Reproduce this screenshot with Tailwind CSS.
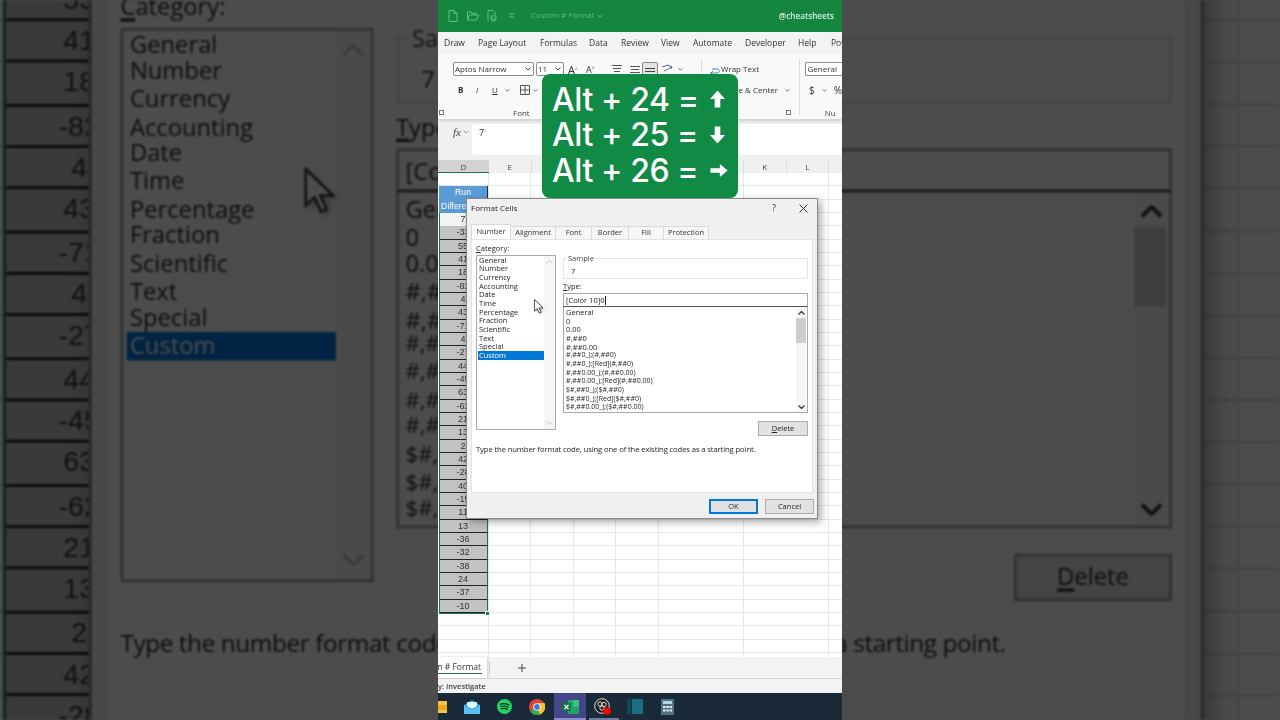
<!doctype html>
<html>
  <head>
    <title>Custom # Format</title>
    <meta charset="UTF-8" />
    <script src="https://cdn.jsdelivr.net/npm/@tailwindcss/browser@4"></script>
  </head>
  <body class="bg-[#4c4c4c] overflow-hidden font-['Open_Sans',sans-serif]">
    <div class="relative w-[1280px] h-[720px] overflow-hidden">
      <!-- blurred, zoomed copy of the video behind it -->
      <div class="absolute inset-0 overflow-hidden blur-[1.2px] brightness-[.3]">
        <div id="backdrop" class="absolute left-0 top-[-780px] w-[404px] h-[720px] origin-top-left scale-[3.168]"></div>
      </div>

      <div class="absolute left-[438px] top-0 w-[404px] h-[720px] overflow-hidden">
        <div id="screen" class="relative w-[404px] h-[720px] flex flex-col bg-white overflow-hidden text-[#262626] blur-[0.25px]">
          <!-- title bar -->
          <div class="h-[32px] bg-[#15863f] flex items-center shrink-0 pl-[10px] pr-[8px]">
            <svg class="w-[10px] h-[12px] text-[#5fc088]" viewBox="0 0 10 12" fill="none" stroke="currentColor"><path d="M1 .5h5l3 3v8H1zM6 .5v3h3" /></svg>
            <svg class="w-[12px] h-[10px] ml-[9px] text-[#5fc088]" viewBox="0 0 12 10" fill="none" stroke="currentColor"><path d="M.5 9V1h3.5l1 1.500h4V4M.5 9l2-5h9l-2 5z" /></svg>
            <svg class="w-[11px] h-[12px] ml-[8px] text-[#5fc088]" viewBox="0 0 11 12" fill="none" stroke="currentColor"><path d="M1 11V.5h5l2 2V5M4 6h5v3H4zM5 9v2h3V9" /></svg>
            <svg class="w-[7px] h-[6px] ml-[10px] text-[#5fc088]" viewBox="0 0 7 6" fill="none" stroke="currentColor"><path d="M1 1h5M1 4h5" /></svg>
            <span class="ml-[16px] text-[7.800px] text-[#5fb985]">Custom # Format</span>
            <svg class="w-[6px] h-[4px] ml-[3px] text-[#5fb985]" viewBox="0 0 6 4" fill="none" stroke="currentColor"><path d="M.5.5 3 3 5.500.5" /></svg>
            <span class="ml-auto text-[8.200px] font-semibold text-[#d5eedd]">@cheatsheets</span>
          </div>

          <!-- ribbon tabs -->
          <div class="h-[22px] bg-[#f3f3f3] flex items-center shrink-0 text-[8.500px] text-[#333] whitespace-nowrap">
            <span class="ml-[6px] w-[34px] shrink-0">Draw</span>
            <span class="w-[62px] shrink-0">Page Layout</span>
            <span class="w-[49px] shrink-0">Formulas</span>
            <span class="w-[32px] shrink-0">Data</span>
            <span class="w-[40px] shrink-0">Review</span>
            <span class="w-[32px] shrink-0">View</span>
            <span class="w-[52px] shrink-0">Automate</span>
            <span class="w-[53px] shrink-0">Developer</span>
            <span class="w-[33px] shrink-0">Help</span>
            <span class="shrink-0">Power</span>
          </div>

          <!-- ribbon -->
          <div class="h-[65px] bg-[#f9f9f9] shrink-0 relative shadow-[0_2px_3px_#cfcfcf] z-10 text-[8.500px] text-[#333]">
            <div class="flex items-center h-[27px] pt-[3px] whitespace-nowrap">
              <div class="ml-[15px] w-[81px] h-[14px] shrink-0 bg-white border border-[#8e8e8e] rounded-[2px] flex items-center pl-[1px] text-[8px]">Aptos Narrow<svg class="w-[6px] h-[4px] ml-auto mr-[2px]" viewBox="0 0 6 4" fill="none" stroke="#444"><path d="M.5.5 3 3 5.500.5" /></svg></div>
              <div class="ml-[2px] w-[28px] h-[14px] shrink-0 bg-white border border-[#8e8e8e] rounded-[2px] flex items-center pl-[1px] text-[8px]">11<svg class="w-[6px] h-[4px] ml-auto mr-[2px]" viewBox="0 0 6 4" fill="none" stroke="#444"><path d="M.5.5 3 3 5.500.5" /></svg></div>
              <span class="ml-[4px] w-[18px] shrink-0 text-[11px] leading-none">A<sup class="text-[5px] text-[#2b6cb0]">^</sup></span>
              <span class="w-[20px] shrink-0 text-[9px] leading-none">A<sup class="text-[5px] text-[#2b6cb0]">˅</sup></span>
              <svg class="ml-[5px] w-[12px] h-[9px] shrink-0" viewBox="0 0 12 9" stroke="#555"><path d="M1 .5h10M2 3.500h8M3 6.500h6" /></svg>
              <svg class="ml-[6px] w-[12px] h-[9px] shrink-0" viewBox="0 0 12 9" stroke="#555"><path d="M1 1.500h10M2 4.500h8M1 7.500h10" /></svg>
              <div class="ml-[1px] w-[16px] h-[14px] shrink-0 bg-[#e3e3e3] border border-[#8a8a8a] rounded-[2px] flex items-end justify-center pb-[2px]"><svg class="w-[10px] h-[5px]" viewBox="0 0 10 5" stroke="#444"><path d="M0 .5h10M0 3.500h10" /></svg></div>
              <svg class="ml-[3px] w-[14px] h-[11px] shrink-0" viewBox="0 0 14 11" fill="none" stroke="#5b6b8a"><path d="M1 3 7 1l3 2M3 7l8-4M9 2l2 1-1 2" /></svg>
              <svg class="ml-[3px] w-[5px] h-[3px] shrink-0" viewBox="0 0 6 4" fill="none" stroke="#444"><path d="M.5.5 3 3 5.500.5" /></svg>
              <svg class="ml-[26px] w-[12px] h-[12px] shrink-0" viewBox="0 0 12 12" fill="none" stroke="#3a8ac4"><path d="M1 10h7c3 0 3-4 0-4H3M4 8 2 10l2 2" /></svg>
              <span class="shrink-0 text-[8px]">Wrap Text</span>
              <div class="ml-[45.500px] w-[38px] h-[14px] shrink-0 bg-white border-y border-l border-[#8e8e8e] rounded-l-[2px] flex items-center pl-[2px] text-[8px]">General</div>
            </div>
            <div class="flex items-center h-[18px] whitespace-nowrap">
              <span class="ml-[20px] w-[18px] shrink-0 text-[8px] font-bold">B</span>
              <span class="w-[16px] shrink-0 text-[8px] italic">I</span>
              <span class="w-[13px] shrink-0 text-[8px] underline">U</span>
              <svg class="w-[5px] h-[3px] shrink-0" viewBox="0 0 6 4" fill="none" stroke="#444"><path d="M.5.5 3 3 5.500.5" /></svg>
              <svg class="ml-[10px] w-[10px] h-[10px] shrink-0" viewBox="0 0 10 10" fill="none" stroke="#555"><path d="M.5.5h9v9h-9zM5 .5v9M.5 5h9" /></svg>
              <svg class="ml-[3px] w-[5px] h-[3px] shrink-0" viewBox="0 0 6 4" fill="none" stroke="#444"><path d="M.5.5 3 3 5.500.5" /></svg>
              <span class="ml-[154px] w-[86px] text-right shrink-0 text-[8px]">Merge &amp; Center</span>
              <svg class="ml-[7px] w-[5px] h-[3px] shrink-0" viewBox="0 0 6 4" fill="none" stroke="#444"><path d="M.5.5 3 3 5.500.5" /></svg>
              <span class="ml-[19px] text-[10px] shrink-0">$</span>
              <svg class="ml-[7px] w-[5px] h-[3px] shrink-0" viewBox="0 0 6 4" fill="none" stroke="#444"><path d="M.5.5 3 3 5.500.5" /></svg>
              <span class="ml-[7px] text-[10px] shrink-0">%</span>
            </div>
            <div class="flex items-center h-[13px] mt-[7px] text-[8px] text-[#444]">
              <span class="ml-[1px] w-[5px] h-[5px] border border-[#777] shrink-0"></span>
              <span class="ml-[69px] shrink-0">Font</span>
              <span class="ml-[256px] w-[5px] h-[5px] border border-[#777] shrink-0"></span>
              <span class="ml-[34px] shrink-0">Nu</span>
            </div>
            <div class="absolute left-[263px] top-[5px] bottom-[4px] w-px bg-[#dcdcdc]"></div>
            <div class="absolute left-[361px] top-[5px] bottom-[4px] w-px bg-[#dcdcdc]"></div>
          </div>

          <!-- formula bar -->
          <div class="h-[41px] bg-[#f0f0f0] shrink-0 flex pt-[5px] pb-[5px]">
            <div class="w-[34px] flex items-start justify-end pr-[3px] pt-[3px]">
              <span class="font-['Liberation_Serif',serif] italic text-[11px] leading-none text-[#444]">fx</span>
              <svg class="ml-[2px] mt-[3px] w-[6px] h-[4px]" viewBox="0 0 6 4" fill="none" stroke="#999"><path d="M.5.5 3 3 5.500.5" /></svg>
            </div>
            <div class="flex-1 bg-white rounded-l-[3px] pl-[7px] pt-[2px] text-[9px] text-[#333]">7</div>
          </div>

          <!-- column headers -->
          <div class="h-[13px] bg-[#f0f0f0] shrink-0 flex text-[8px] text-[#444] leading-[13px]">
            <div class="w-[51px] text-center bg-[#d2d2d2] border-b border-[#217346]">D</div>
            <div class="w-[42.500px] text-center border-r border-[#dcdcdc]">E</div>
            <div class="w-[42.500px] border-r border-[#dcdcdc]"></div>
            <div class="w-[42.500px] border-r border-[#dcdcdc]"></div>
            <div class="w-[42.500px] border-r border-[#dcdcdc]"></div>
            <div class="w-[42.500px] border-r border-[#dcdcdc]"></div>
            <div class="w-[42.500px] border-r border-[#dcdcdc]"></div>
            <div class="w-[42.500px] text-center border-r border-[#dcdcdc]">K</div>
            <div class="w-[42.500px] text-center border-r border-[#dcdcdc]">L</div>
          </div>

          <!-- sheet -->
          <div class="flex-1 flex min-h-0 bg-[image:repeating-linear-gradient(to_bottom,transparent_0,transparent_12.33px,#e6e6e6_12.33px,#e6e6e6_13.33px)]">
            <div class="w-[51px] shrink-0 border-r border-[#e6e6e6] pl-[1px]">
              <div class="h-[13.330px]"></div>
              <div class="h-[26.670px] bg-[#5b9bd5] text-white text-[8.700px] leading-[13.330px] text-center font-['Liberation_Sans',sans-serif] border-r border-[#1b2a3a] overflow-hidden whitespace-nowrap">Run<br />Differences</div>
              <div id="cells" class="relative border-x border-b border-[#217346] font-['Liberation_Sans',sans-serif] text-[9px] text-[#333] text-center">
                <div class="absolute right-[-3px] bottom-[-3px] w-[5px] h-[5px] bg-[#217346] border border-white z-10"></div>
              </div>
            </div>
            <div class="flex-1 bg-[image:repeating-linear-gradient(to_right,transparent_0,transparent_41.500px,#e6e6e6_41.500px,#e6e6e6_42.500px)]"></div>
          </div>

          <!-- sheet tabs -->
          <div class="h-[21px] bg-[#f3f3f3] shrink-0 flex items-stretch">
            <div class="w-[49px] bg-white flex items-center justify-end pr-[6px] font-medium text-[8.500px] text-[#333] shadow-[1px_0_2px_#ccc] whitespace-nowrap overflow-hidden relative">n # Format<span class="absolute left-0 right-[5px] bottom-[4px] h-[1.500px] bg-[#217346]"></span></div>
            <div class="w-px h-[13px] bg-[#ccc] ml-[2px] self-center"></div>
            <svg class="ml-[28px] w-[8px] h-[8px] self-center" viewBox="0 0 8 8" stroke="#444"><path d="M4 0v8M0 4h8" /></svg>
          </div>

          <!-- status bar -->
          <div class="h-[15px] bg-[#f3f3f3] border-t border-[#d5d5d5] shrink-0 text-[7.500px] font-semibold text-[#444] leading-[14px] whitespace-nowrap">y: Investigate</div>

          <!-- taskbar -->
          <div class="h-[27px] bg-[#1a2a39] shrink-0 flex items-center relative">
            <svg class="absolute left-0 w-[9px] h-[14px]" viewBox="0 0 9 14"><path d="M0 1h9v12H0z" fill="#f4c542" /><path d="M0 5h9v5H0z" fill="#e8a91c" /></svg>
            <svg class="absolute left-[26px] w-[16px] h-[14px]" viewBox="0 0 16 14"><path d="M0 5 8 0l8 5v9H0z" fill="#1d9fe0" /><path d="M0 5l8 5 8-5v9H0z" fill="#54c1f0" /><path d="M3 2h10v4L8 9 3 6z" fill="#e8f5fb" /></svg>
            <svg class="absolute left-[59px] w-[15px] h-[15px]" viewBox="0 0 16 16"><circle cx="8" cy="8" r="8" fill="#1ed760" /><path d="M3.500 5.500c3-1 6-.8 9 .8M4 8c2.500-.8 5.500-.6 7.800.7M4.500 10.500c2-.6 4.500-.5 6.500.6" fill="none" stroke="#123" stroke-width="1.300" stroke-linecap="round" /></svg>
            <svg class="absolute left-[91px] w-[16px] h-[16px]" viewBox="0 0 16 16"><circle cx="8" cy="8" r="8" fill="#e34133" /><path d="M8 8 1 12a8 8 0 0 0 7 4 8 8 0 0 0 7-4z" fill="#2fa84f" /><path d="M8 4h7.500a8 8 0 0 1-.5 8l-4 3.800L8 8z" fill="#fbc02d" /><circle cx="8" cy="8" r="3.800" fill="#fff" /><circle cx="8" cy="8" r="2.900" fill="#3b82d6" /></svg>
            <div class="absolute left-[116px] top-0 bottom-0 w-[32px] bg-[#45458a] border-b-2 border-[#8d8dc9]"></div>
            <svg class="absolute left-[124px] w-[17px] h-[14px]" viewBox="0 0 17 14"><path d="M6 0h11v14H6z" fill="#21a366" /><path d="M11 0h6v7h-6z" fill="#33c481" /><path d="M0 3h9v8H0z" fill="#107c41" /><path d="M2.500 4.800 6.500 9.200M6.500 4.800 2.500 9.200" stroke="#fff" stroke-width="1.200" /></svg>
            <div class="absolute left-[148px] bottom-0 h-[2px] w-[30px] ml-[3px] bg-[#6f7f9a]"></div>
            <svg class="absolute left-[156px] w-[17px] h-[17px]" viewBox="0 0 17 17"><circle cx="8" cy="8" r="7.300" fill="#1e1e1e" stroke="#ddd" /><circle cx="6" cy="6" r="2.200" fill="none" stroke="#ddd" /><circle cx="10" cy="6.500" r="2.200" fill="none" stroke="#ddd" /><circle cx="8" cy="10" r="2.200" fill="none" stroke="#ddd" /><circle cx="13" cy="13" r="3.800" fill="#f00" /></svg>
            <svg class="absolute left-[189px] w-[16px] h-[15px]" viewBox="0 0 16 15"><path d="M0 0h4v15H0z" fill="#0e4a5a" /><path d="M5 0h11v15H5z" fill="#1c6f82" /></svg>
            <svg class="absolute left-[223px] w-[13px] h-[16px]" viewBox="0 0 13 16"><path d="M0 0h13v16H0z" fill="#4f7186" /><path d="M2 2h9v3H2z" fill="#b6d5e6" /><path d="M2 7h2.500v2H2zM5.300 7h2.500v2H5.300zM8.600 7h2.500v2H8.600zM2 10.500h2.500v2H2zM5.300 10.500h2.500v2H5.300zM8.600 10.500h2.500v2H8.600z" fill="#e8eef2" /></svg>
          </div>

          <!-- Format Cells dialog -->
          <div class="absolute left-[28px] top-[197.500px] w-[352px] h-[321px] bg-[#f0f0f0] border border-[#8a8a8a] shadow-[3px_3px_8px_rgba(0,0,0,.35)] text-[8px] text-[#262626] z-20">
            <div class="h-[25px] flex items-center pl-[4px] pb-[6px] relative">
              <span class="text-[8px]">Format Cells</span>
              <span class="absolute left-[305px] text-[9px]">?</span>
              <svg class="absolute left-[332px] w-[9px] h-[9px]" viewBox="0 0 9 9" stroke="#333"><path d="M.5.5l8 8M8.500.5l-8 8" /></svg>
            </div>
            <div class="flex pl-[4px] h-[15px] items-end text-center text-[7.500px] text-[#333]">
              <div class="w-[40px] h-[15px] bg-white border-x border-t border-[#d9d9d9] leading-[12px] relative z-10">Number</div>
              <div class="w-[45px] h-[13px] bg-[#f6f6f6] border-r border-t border-[#d9d9d9] leading-[10px]">Alignment</div>
              <div class="w-[36px] h-[13px] bg-[#f6f6f6] border-r border-t border-[#d9d9d9] leading-[10px]">Font</div>
              <div class="w-[37px] h-[13px] bg-[#f6f6f6] border-r border-t border-[#d9d9d9] leading-[10px]">Border</div>
              <div class="w-[35px] h-[13px] bg-[#f6f6f6] border-r border-t border-[#d9d9d9] leading-[10px]">Fill</div>
              <div class="w-[45px] h-[13px] bg-[#f6f6f6] border-r border-t border-[#d9d9d9] leading-[10px]">Protection</div>
            </div>
            <div class="relative mx-[4px] h-[254px] bg-white border border-[#e3e3e3] px-[4px] pt-[4px]">
              <div class="flex gap-[7px] h-[186px]">
                <div class="w-[80px] shrink-0">
                  <div class="h-[11px] leading-[9px] text-[7.500px]"><span class="underline">C</span>ategory:</div>
                  <div class="relative h-[175px] border border-[#aaa] pl-[1px] text-[7.500px] leading-[8.670px] flex flex-col">
                    <span class="px-[1px]">General</span>
                    <span class="px-[1px]">Number</span>
                    <span class="px-[1px]">Currency</span>
                    <span class="px-[1px]">Accounting</span>
                    <span class="px-[1px]">Date</span>
                    <span class="px-[1px]">Time</span>
                    <span class="px-[1px]">Percentage</span>
                    <span class="px-[1px]">Fraction</span>
                    <span class="px-[1px]">Scientific</span>
                    <span class="px-[1px]">Text</span>
                    <span class="px-[1px]">Special</span>
                    <span class="px-[1px] w-[67px] bg-[#0078d7] text-white">Custom</span>
                    <div class="absolute right-0 top-0 bottom-0 w-[11px] bg-[#f6f6f6] flex flex-col justify-between items-center py-[4px]">
                      <svg class="w-[7px] h-[4px]" viewBox="0 0 7 4" fill="none" stroke="#c4c4c4"><path d="M.5 3.500 3.500.5l3 3" /></svg>
                      <svg class="w-[7px] h-[4px]" viewBox="0 0 7 4" fill="none" stroke="#c4c4c4"><path d="M.5.5l3 3 3-3" /></svg>
                    </div>
                  </div>
                </div>
                <div class="flex-1 min-w-0">
                  <fieldset class="h-[21px] mt-[14.500px] border border-[#e3e3e3] relative">
                    <span class="absolute left-[3px] top-[-4px] bg-white px-[1px] text-[7.500px] leading-none text-[#444]">Sample</span>
                    <span class="absolute left-[7px] top-[9px] text-[7.500px] leading-none">7</span>
                  </fieldset>
                  <div class="h-[14px] pt-[3px] text-[7.500px] leading-[9px]"><span class="underline">T</span>ype:</div>
                  <div class="h-[14px] border border-[#aaa] border-b-[#555] pl-[2px] text-[7.500px] leading-[12px] flex items-center">[Color 10]0<span class="ml-[1px] w-px h-[9px] bg-[#222]"></span></div>
                  <div class="relative h-[106px] border border-[#aaa] border-t-0 pl-[2px] pt-[1px] text-[7.500px] leading-[8.670px] flex flex-col whitespace-nowrap overflow-hidden">
                    <span>General</span>
                    <span>0</span>
                    <span>0.00</span>
                    <span>#,##0</span>
                    <span>#,##0.00</span>
                    <span class="text-[7px]">#,##0_);(#,##0)</span>
                    <span class="text-[7px]">#,##0_);[Red](#,##0)</span>
                    <span class="text-[7px]">#,##0.00_);(#,##0.00)</span>
                    <span class="text-[7px]">#,##0.00_);[Red](#,##0.00)</span>
                    <span class="text-[7px]">$#,##0_);($#,##0)</span>
                    <span class="text-[7px]">$#,##0_);[Red]($#,##0)</span>
                    <span class="text-[7px]">$#,##0.00_);($#,##0.00)</span>
                    <div class="absolute right-[1px] top-0 bottom-0 w-[10px] bg-[#f6f6f6] flex flex-col items-center pt-[4px] pb-[3px]">
                      <svg class="w-[7px] h-[4px] shrink-0" viewBox="0 0 7 4" fill="none" stroke="#333" stroke-width="1.200"><path d="M.5 3.500 3.500.5l3 3" /></svg>
                      <div class="w-full h-[25px] mt-[3px] bg-[#cdcdcd]"></div>
                      <svg class="w-[7px] h-[4px] mt-auto shrink-0" viewBox="0 0 7 4" fill="none" stroke="#333" stroke-width="1.200"><path d="M.5.500l3 3 3-3" /></svg>
                    </div>
                  </div>
                  <div class="flex justify-end mt-[8px]">
                    <div class="w-[50px] h-[15px] bg-[#e1e1e1] border border-[#adadad] text-center text-[7.500px] leading-[13px]"><span class="underline">D</span>elete</div>
                  </div>
                </div>
              </div>
              <p class="mt-[14px] text-[7.700px] tracking-[-0.13px] leading-[10px] whitespace-nowrap">Type the number format code, using one of the existing codes as a starting point.</p>
            </div>
            <div class="flex justify-end gap-[7px] pr-[3px] pt-[6px] text-[7.500px]">
              <div class="w-[49px] h-[15px] bg-[#e1e1e1] border-2 border-[#0078d7] text-center leading-[11px]">OK</div>
              <div class="w-[49px] h-[15px] bg-[#e1e1e1] border border-[#adadad] text-center leading-[13px]">Cancel</div>
            </div>
          </div>

          <!-- pointer -->
          <svg class="absolute left-[96px] top-[299px] w-[11px] h-[15px] z-30 drop-shadow-[1px_1px_1px_rgba(0,0,0,.3)]" viewBox="0 0 11 15"><path d="M.5.500v11.500l2.800-2.500 2 4.500 1.800-.8-2-4.300h3.900z" fill="#fff" stroke="#333" stroke-width=".8" /></svg>

          <div class="absolute left-[104px] top-[74px] w-[196px] h-[124px] bg-[#118a45] rounded-[8px] z-30"></div>
        </div>

        <!-- shortcut card -->
        <div class="absolute left-[104px] top-[74px] w-[196px] h-[124px] px-[10px] py-[7.500px] flex flex-col text-white font-['Inter',sans-serif] font-medium text-[32px] tracking-[-0.4px] leading-[35.500px] z-40">
          <div class="flex items-center justify-between"><span>Alt + 24 =</span><svg class="w-[15px] h-[18px] mr-[3px]" viewBox="0 0 16 18" fill="#fff"><path d="M8 0 16 9H11V18H5V9H0z" /></svg></div>
          <div class="flex items-center justify-between"><span>Alt + 25 =</span><svg class="w-[15px] h-[18px] mr-[3px]" viewBox="0 0 16 18" fill="#fff"><path d="M8 18 16 9H11V0H5V9H0z" /></svg></div>
          <div class="flex items-center justify-between"><span>Alt + 26 =</span><svg class="w-[18px] h-[13px]" viewBox="0 0 20 15" fill="#fff"><path d="M20 7.500 11 0V5H0v5h11v5z" /></svg></div>
        </div>
      </div>
    </div>
    <script>
      const values = [7, -33, 55, 41, 18, -82, 4, 43, -71, 4, -27, 44, -45, 63, -62, 21, 13, 2, 42, -28, 40, -15, 11, 13, -36, -32, -38, 24, -37, -10];
      const cells = document.getElementById("cells");
      values.forEach((v, i) => {
        const cell = document.createElement("div");
        cell.className = i === 0
          ? "h-[13.330px] leading-[13.330px] bg-[#f4f4f4] pr-[1px]"
          : "h-[13.330px] leading-[12.330px] bg-[#c2c2c2] border-b border-[#222] pr-[1px]";
        cell.textContent = v;
        cells.appendChild(cell);
      });
      // the backdrop is the same screen, zoomed and darkened
      const copy = document.getElementById("screen").cloneNode(true);
      copy.removeAttribute("id");
      copy.querySelector("#cells").removeAttribute("id");
      document.getElementById("backdrop").appendChild(copy);
    </script>
  </body>
</html>
